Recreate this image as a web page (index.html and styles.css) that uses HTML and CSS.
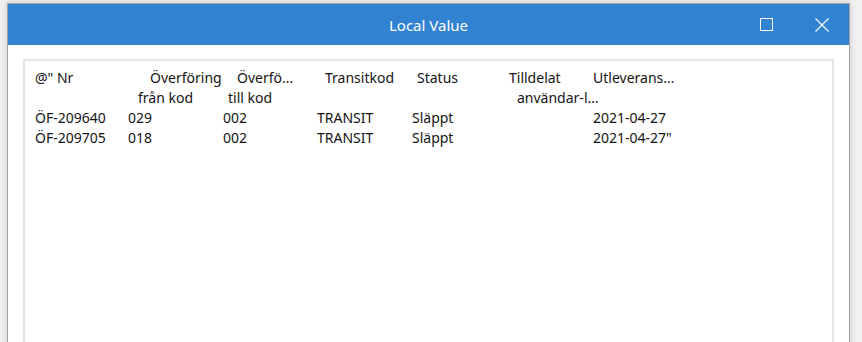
FILE: index.html
```html
<!DOCTYPE html>
<html lang="sv">
<head>
    <meta charset="UTF-8">
    <meta name="viewport" content="width=device-width, initial-scale=1.0">
    <title>Local Value</title>
    <link rel="stylesheet" href="styles.css">
</head>
<body>
    <div class="window">
        <div class="titlebar">
            <div></div>
            <div class="title">Local Value</div>
            <div class="buttons">
                <div class="btn">
                    <svg width="13" height="13" viewBox="0 0 13 13"><rect x="0.5" y="0.5" width="12" height="12" fill="none" stroke="#fff" stroke-width="1"/></svg>
                </div>
                <div class="btn">
                    <svg width="14" height="14" viewBox="0 0 14 14"><path d="M0.5 0.5 L13.5 13.5 M13.5 0.5 L0.5 13.5" stroke="#fff" stroke-width="1.1" fill="none"/></svg>
                </div>
            </div>
        </div>
        <div class="content">
            <div class="panel">
                <div class="grid">
                    <div class="head"><span>@" Nr</span></div>
                    <div class="head"><span class="h-from1">Överföring</span><span class="h-from2">från kod</span></div>
                    <div class="head"><span class="h-to1">Överfö…</span><span class="h-to2">till kod</span></div>
                    <div class="head"><span class="h-transit">Transitkod</span></div>
                    <div class="head"><span class="h-status">Status</span></div>
                    <div class="head"><span class="h-user1">Tilldelat</span><span class="h-user2">användar-l…</span></div>
                    <div class="head"><span>Utleverans…</span></div>

                    <div>ÖF-209640</div>
                    <div>029</div>
                    <div>002</div>
                    <div>TRANSIT</div>
                    <div>Släppt</div>
                    <div></div>
                    <div>2021-04-27</div>

                    <div>ÖF-209705</div>
                    <div>018</div>
                    <div>002</div>
                    <div>TRANSIT</div>
                    <div>Släppt</div>
                    <div></div>
                    <div>2021-04-27"</div>
                </div>
            </div>
        </div>
    </div>
</body>
</html>
```

FILE: styles.css
```css
body {
    margin: 0;
    padding: 3px 0 0 7px;
    height: 342px;
    overflow: hidden;
    box-sizing: border-box;
    background-color: #f2f2f2;
    font-family: "Noto Sans", "Open Sans", sans-serif;
}
.window {
    width: 841px;
    height: 420px;
    border: 1px solid #a3a3a3;
    background-color: #fff;
    box-shadow: 0 0 7px rgba(0,0,0,0.18);
}
.titlebar {
    height: 41px;
    background-color: #3282d2;
    display: grid;
    grid-template-columns: 1fr auto 1fr;
    align-items: center;
    color: #fff;
}
.title {
    font-size: 15px;
}
.buttons {
    justify-self: end;
    display: flex;
    height: 100%;
}
.btn {
    width: 55px;
    display: flex;
    align-items: center;
    justify-content: center;
}
.content {
    padding: 14px 15px 0 15px;
}
.panel {
    height: 360px;
    border: 2px solid #e4e4e4;
    padding: 7px 0 0 10px;
}
.grid {
    display: grid;
    grid-template-columns: 93px 95px 94px 95px 93px 88px 1fr;
    font-size: 14px;
    line-height: 20px;
    color: #141414;
    white-space: nowrap;
}
.head span {
    display: block;
}
.h-from1 { padding-left: 22px; }
.h-from2 { padding-left: 10px; }
.h-to1 { padding-left: 14px; }
.h-to2 { padding-left: 5px; }
.h-transit { padding-left: 8px; }
.h-status { padding-left: 5px; }
.h-user1 { padding-left: 4px; }
.h-user2 { padding-left: 12px; }
```
